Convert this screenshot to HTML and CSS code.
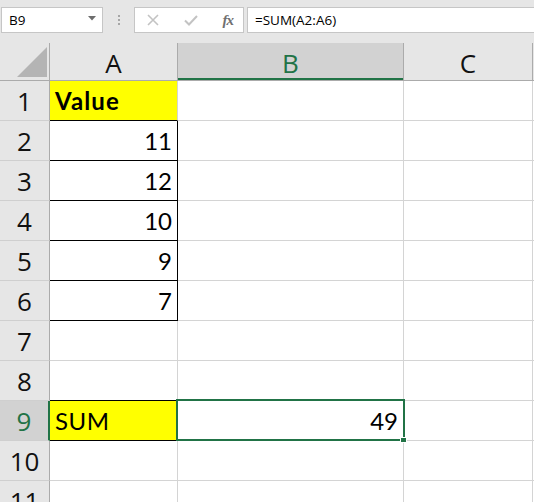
FILE: index.html
```html
<!DOCTYPE html>
<html lang="en">
<head>
    <meta charset="UTF-8">
    <title>SUM example</title>
    <link rel="stylesheet" href="styles.css">
</head>
<body>
  <!-- Formula bar -->
  <div class="toolbar">
    <div class="name-box">
      <span>B9</span>
      <svg class="caret" width="8" height="5" viewBox="0 0 8 5"><path d="M0 0h8L4 4.5z" fill="#6d6d6d"/></svg>
    </div>
    <div class="grip"><i></i><i></i><i></i></div>
    <div class="fx-box">
      <svg width="12" height="12" viewBox="0 0 12 12"><path d="M1 1l10 10M11 1L1 11" stroke="#c3c3c3" stroke-width="1.6" fill="none"/></svg>
      <svg width="14" height="12" viewBox="0 0 14 12"><path d="M1 6.5l4 4L13 2" stroke="#c3c3c3" stroke-width="2" fill="none"/></svg>
      <span class="fx">fx</span>
    </div>
    <div class="formula">=SUM(A2:A6)</div>
  </div>

  <!-- Sheet -->
  <div class="sheet">
    <div class="cell corner"><div class="tri"></div></div>
    <div class="cell hd">A</div>
    <div class="cell hd sel-col">B</div>
    <div class="cell hd">C</div>
    <div class="cell hd"></div>

    <div class="cell rh">1</div>
    <div class="cell fill bold txt bb">Value</div>
    <div class="cell"></div>
    <div class="cell"></div>
    <div class="cell"></div>

    <div class="cell rh">2</div>
    <div class="cell num bb br">11</div>
    <div class="cell"></div>
    <div class="cell"></div>
    <div class="cell"></div>

    <div class="cell rh">3</div>
    <div class="cell num bb br">12</div>
    <div class="cell"></div>
    <div class="cell"></div>
    <div class="cell"></div>

    <div class="cell rh">4</div>
    <div class="cell num bb br">10</div>
    <div class="cell"></div>
    <div class="cell"></div>
    <div class="cell"></div>

    <div class="cell rh">5</div>
    <div class="cell num bb br">9</div>
    <div class="cell"></div>
    <div class="cell"></div>
    <div class="cell"></div>

    <div class="cell rh">6</div>
    <div class="cell num bb br">7</div>
    <div class="cell"></div>
    <div class="cell"></div>
    <div class="cell"></div>

    <div class="cell rh">7</div>
    <div class="cell"></div>
    <div class="cell"></div>
    <div class="cell"></div>
    <div class="cell"></div>

    <div class="cell rh">8</div>
    <div class="cell bb"></div>
    <div class="cell"></div>
    <div class="cell"></div>
    <div class="cell"></div>

    <div class="cell rh sel-row">9</div>
    <div class="cell fill txt bb">SUM</div>
    <div class="cell num active">49<span class="handle"></span></div>
    <div class="cell"></div>
    <div class="cell"></div>

    <div class="cell rh">10</div>
    <div class="cell"></div>
    <div class="cell"></div>
    <div class="cell"></div>
    <div class="cell"></div>

    <div class="cell rh">11</div>
    <div class="cell"></div>
    <div class="cell"></div>
    <div class="cell"></div>
    <div class="cell"></div>
  </div>
</body>
</html>
```

FILE: styles.css
```css
* {
    margin: 0;
    padding: 0;
    box-sizing: border-box;
}

body {
    width: 534px;
    height: 502px;
    overflow: hidden;
    background: #ffffff;
    font-family: 'Open Sans', 'Liberation Sans', sans-serif;
    color: #000000;
}

/* Formula bar */
.toolbar {
    height: 43px;
    background: #e6e6e6;
    display: flex;
    align-items: flex-start;
    padding: 7px 0 0 1px;
    font-size: 13.5px;
}

.name-box,
.fx-box,
.formula {
    height: 26px;
    background: #ffffff;
    border: 1px solid #c6c6c6;
    display: flex;
    align-items: center;
}

.name-box {
    width: 102px;
    padding: 0 6px 0 7px;
    justify-content: space-between;
}

.caret {
    margin-top: -4px;
}

.grip {
    width: 31px;
    height: 26px;
    display: flex;
    flex-direction: column;
    align-items: center;
    justify-content: center;
    gap: 2px;
}

.grip i {
    width: 2px;
    height: 2px;
    background: #a6a6a6;
}

.fx-box {
    width: 110px;
    padding: 0 10px 0 12px;
    justify-content: space-between;
}

.fx {
    font-family: 'Liberation Serif', serif;
    font-style: italic;
    font-weight: 700;
    font-size: 15px;
    color: #707070;
    letter-spacing: -1px;
}

.formula {
    flex: 1;
    margin-left: 3px;
    border-right: none;
    padding-left: 7px;
}

/* Grid */
.sheet {
    display: grid;
    grid-template-columns: 50px 128px 226px 129px 1fr;
    grid-template-rows: 38px;
    grid-auto-rows: 40px;
    font-family: 'Lato', 'Open Sans', sans-serif;
    font-size: 24px;
}

.cell {
    border-right: 1px solid #d4d4d4;
    border-bottom: 1px solid #d4d4d4;
    display: flex;
    align-items: center;
    padding: 0 5px 0 5px;
    white-space: nowrap;
    position: relative;
}

.hd,
.rh,
.corner {
    background: #e6e6e6;
    font-family: 'Open Sans', sans-serif;
    font-size: 26px;
    justify-content: center;
    color: #111111;
    padding: 0;
}

.hd {
    border-bottom-color: #ababab;
    border-right-color: #ababab;
    padding-top: 2px;
}

.corner {
    border-right-color: #ababab;
    border-bottom-color: #ababab;
    justify-content: flex-end;
    align-items: flex-end;
    padding: 0 2px 3px 0;
}

.tri {
    width: 30px;
    height: 30px;
    background: #b4b4b4;
    clip-path: polygon(100% 0, 100% 100%, 0 100%);
}

.rh {
    border-right-color: #ababab;
    border-bottom-color: #cfcfcf;
}

.sel-col {
    background: #d2d2d2;
    color: #217346;
    box-shadow: inset 0 -2px 0 #217346;
}

.sel-row {
    background: #d2d2d2;
    color: #217346;
    border-right: 2px solid #217346;
}

.num {
    justify-content: flex-end;
}

.txt {
    letter-spacing: 0.6px;
}

.fill {
    background: #ffff00;
}

.bold {
    font-weight: 700;
    letter-spacing: 1.1px;
}

.bb {
    border-bottom-color: #000000;
}

.br {
    border-right-color: #000000;
}

/* Active cell */
.active::after {
    content: '';
    position: absolute;
    top: -2px;
    left: -2px;
    right: -2px;
    bottom: -1px;
    border: 2px solid #217346;
}

.handle {
    position: absolute;
    right: -4px;
    bottom: -3px;
    width: 7px;
    height: 6px;
    background: #217346;
    border: 1px solid #ffffff;
    z-index: 1;
}
```
